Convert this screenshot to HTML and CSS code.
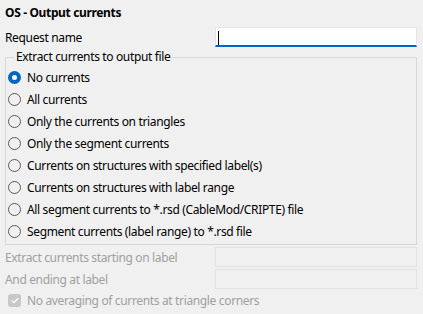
FILE: index.html
```html
<!DOCTYPE html>
<html lang="en">
<head>
    <meta charset="UTF-8">
    <title>OS - Output currents</title>
    <link rel="stylesheet" href="styles.css">
</head>
<body>
    <div class="panel">
        <h1 class="title">OS - Output currents</h1>

        <div class="field-row">
            <label class="field-label" for="request-name">Request name</label>
            <div class="text-box active"><span class="caret"></span></div>
        </div>

        <fieldset class="group">
            <legend>Extract currents to output file</legend>
            <div class="option"><span class="radio checked"></span>No currents</div>
            <div class="option"><span class="radio"></span>All currents</div>
            <div class="option"><span class="radio"></span>Only the currents on triangles</div>
            <div class="option"><span class="radio"></span>Only the segment currents</div>
            <div class="option"><span class="radio"></span>Currents on structures with specified label(s)</div>
            <div class="option"><span class="radio"></span>Currents on structures with label range</div>
            <div class="option"><span class="radio"></span>All segment currents to *.rsd (CableMod/CRIPTE) file</div>
            <div class="option"><span class="radio"></span>Segment currents (label range) to *.rsd file</div>
        </fieldset>

        <div class="field-row disabled">
            <span class="field-label">Extract currents starting on label</span>
            <div class="text-box"></div>
        </div>
        <div class="field-row disabled">
            <span class="field-label">And ending at label</span>
            <div class="text-box"></div>
        </div>

        <div class="check-row disabled">
            <span class="checkbox">
                <svg width="8" height="7" viewBox="0 0 8 7"><path d="M0.8 3.6 L3 5.7 L7.2 1.2" fill="none" stroke="#fff" stroke-width="1.3"/></svg>
            </span>
            No averaging of currents at triangle corners
        </div>
    </div>
</body>
</html>
```

FILE: styles.css
```css
body {
    margin: 0;
    background-color: #f0f0f0;
    font-family: 'Noto Sans', sans-serif;
    font-size: 12px;
    letter-spacing: -0.35px;
    color: #000;
}

.panel {
    padding: 2px 6px 0 5px;
}

.title {
    margin: 0;
    font-size: 12px;
    font-weight: bold;
    line-height: 22px;
}

.field-row {
    display: grid;
    grid-template-columns: 210px 1fr;
    align-items: center;
    height: 22px;
}

.field-row:first-of-type {
    margin-top: 2px;
}

.text-box {
    height: 20px;
    box-sizing: border-box;
    border: 1px solid #e3e3e3;
    background-color: #f0f0f0;
}

.text-box.active {
    background-color: #fff;
    border-color: #e6e6e6;
    border-bottom: 2px solid #0067c0;
    padding: 3px 0 0 2px;
}

.caret {
    display: block;
    width: 1px;
    height: 14px;
    background-color: #000;
}

.group {
    margin: 2px 0 1px 0;
    padding: 2px 0 2px 2px;
    border: 1px solid #d8d8d8;
}

.group legend {
    margin-left: 6px;
    padding: 0 2px;
    line-height: 14px;
}

.option {
    display: flex;
    align-items: center;
    height: 22px;
}

.radio {
    width: 13px;
    height: 13px;
    box-sizing: border-box;
    border: 1px solid #5a5a5a;
    border-radius: 50%;
    margin-right: 6px;
    background-color: #f0f0f0;
}

.radio.checked {
    border: 4px solid #0067c0;
    background-color: #fff;
}

.disabled {
    color: #a0a0a0;
}

.check-row {
    display: flex;
    align-items: center;
    height: 20px;
    padding-left: 3px;
}

.checkbox {
    display: flex;
    align-items: center;
    justify-content: center;
    width: 13px;
    height: 13px;
    border-radius: 3px;
    background-color: #c8c8c8;
    margin-right: 6px;
}
```
